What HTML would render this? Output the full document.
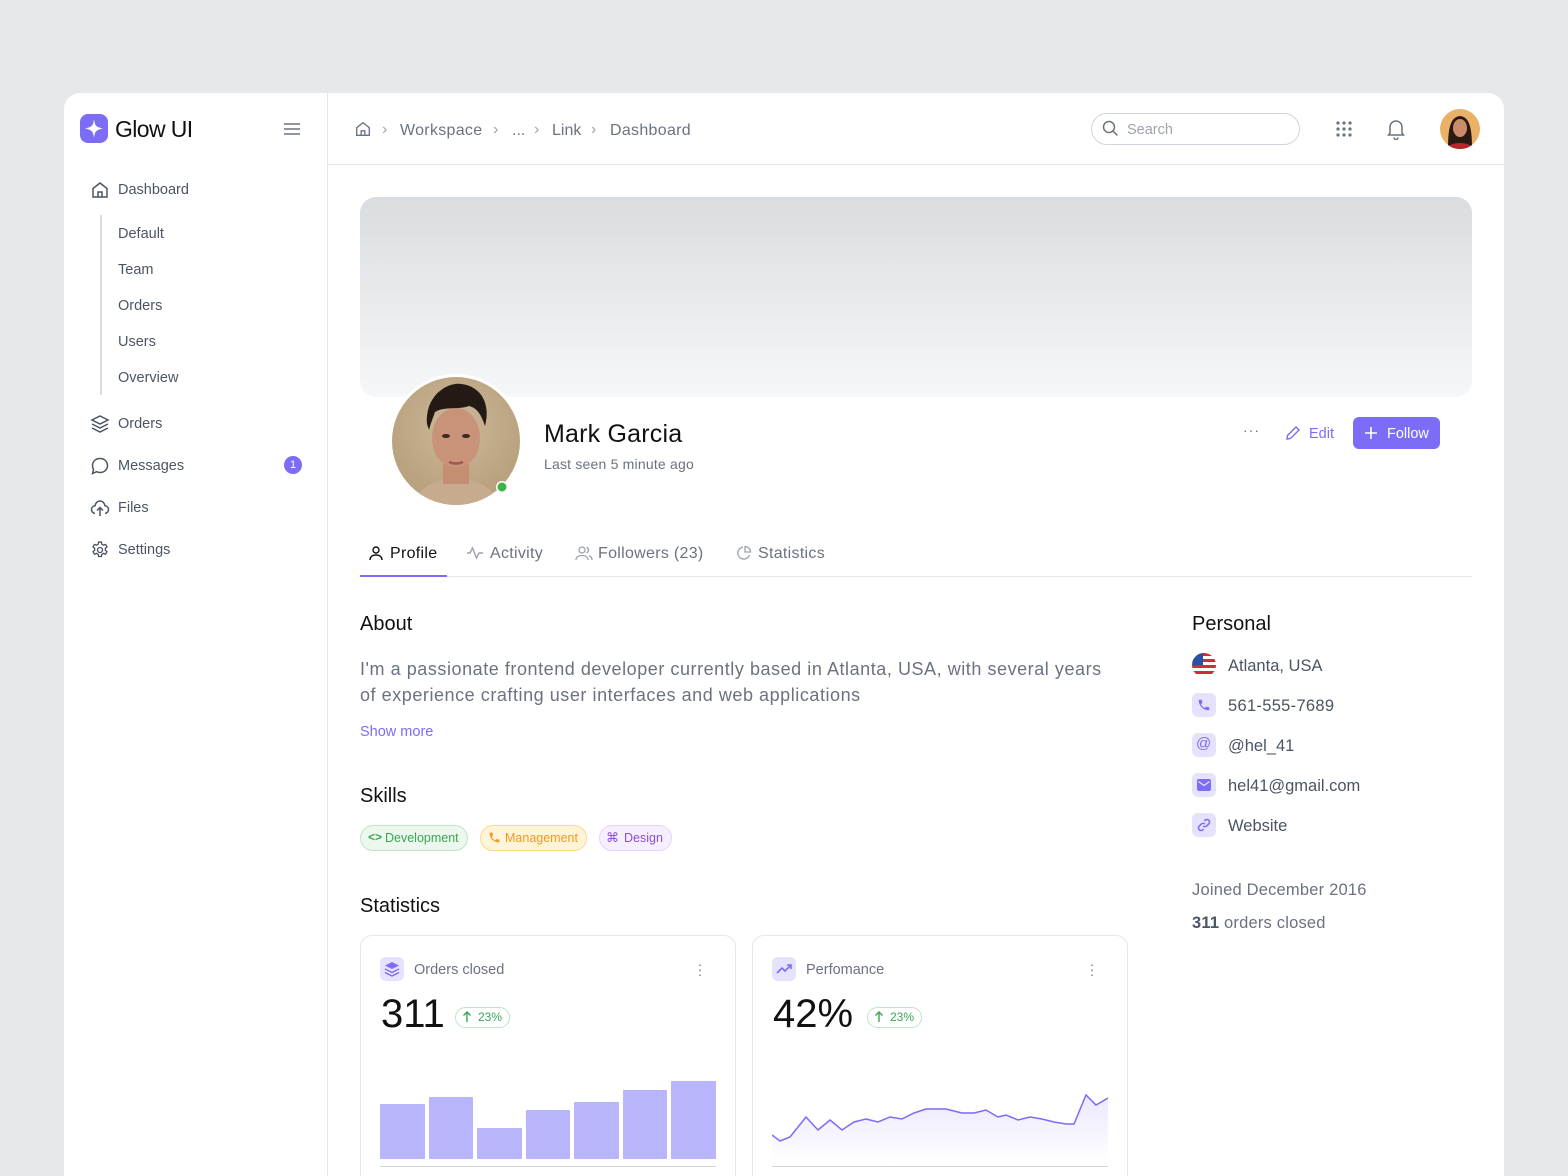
<!DOCTYPE html>
<html style="width:1568px;height:1176px;overflow:hidden"><head><meta charset="utf-8"><style>
*{box-sizing:border-box;margin:0;padding:0}
body{width:1568px;height:1176px;background:#e6e8ec;font-family:"Liberation Sans",sans-serif;position:relative;overflow:hidden;color:#111827}
.wrap{position:absolute;left:0;top:0;width:1568px;height:1176px;overflow:hidden}
.a{position:absolute;white-space:nowrap}
.card{position:absolute;left:64px;top:93px;width:1440px;height:1140px;background:#fff;border-radius:16px;overflow:hidden}
.side{position:absolute;left:0;top:0;width:264px;height:100%;border-right:1px solid #e5e7eb}
.nav{font-size:14.5px;color:#4b5563}
.gray{color:#6b7280}
svg{position:absolute}
.tab{font-size:16px;color:#6b7280;letter-spacing:0.3px}
.pi{position:absolute;width:24px;height:24px;border-radius:6px;background:#e4e2fd}
.chip{position:absolute;height:26px;border-radius:13px;font-size:12.5px;line-height:24px;padding:0 8px 0 24px;border:1px solid}
.sc{position:absolute;top:935px;width:376px;height:260px;border:1px solid #e5e7eb;border-radius:12px}
.badge{position:absolute;height:21px;border:1px solid #bfe6c5;border-radius:11px;color:#3aa553;font-size:12px;line-height:19px;padding:0 7px 0 22px}
</style></head><body><div class="wrap">
<div class="card">
<div class="side">
<svg style="left:16px;top:21px" width="28" height="29" viewBox="0 0 28 29"><rect x="0" y="0" width="28" height="29" rx="8" fill="#7c6cf6"/><path d="M14 5 C15 12 16 13 23 14.5 C16 16 15 17 14 24 C13 17 12 16 5 14.5 C12 13 13 12 14 5Z" fill="#fff"/></svg>
<div class="a" style="left:51px;top:23px;font-size:23px;letter-spacing:-0.6px;color:#111">Glow UI</div>
<svg style="left:219px;top:29px" width="18" height="14" viewBox="0 0 18 14"><path d="M1 2h16M1 7h16M1 12h16" stroke="#6b7280" stroke-width="1.6"/></svg>
<svg style="left:26px;top:87px" width="20" height="20" viewBox="0 0 20 20" fill="none" stroke="#4b5563" stroke-width="1.5"><path d="M3 8.5L10 3l7 5.5V17H3z"/><path d="M8 17v-5h4v5"/></svg>
<div class="a nav" style="left:54px;top:89px">Dashboard</div>
<div class="a" style="left:36px;top:122px;width:2px;height:180px;background:#d9dce1"></div>
<div class="a nav" style="left:54px;top:133px">Default</div>
<div class="a nav" style="left:54px;top:169px">Team</div>
<div class="a nav" style="left:54px;top:205px">Orders</div>
<div class="a nav" style="left:54px;top:241px">Users</div>
<div class="a nav" style="left:54px;top:277px">Overview</div>
<svg style="left:26px;top:321px" width="20" height="20" viewBox="0 0 20 20" fill="none" stroke="#4b5563" stroke-width="1.5"><path d="M10 2l8 4-8 4-8-4z"/><path d="M2 10l8 4 8-4M2 14l8 4 8-4"/></svg>
<div class="a nav" style="left:54px;top:323px">Orders</div>
<svg style="left:26px;top:363px" width="20" height="20" viewBox="0 0 20 20" fill="none" stroke="#4b5563" stroke-width="1.5"><path d="M10 2.5c4.4 0 7.5 3 7.5 7s-3.1 7-7.5 7c-1.3 0-2.5-.3-3.5-.8L2.5 17.5l1-3.8C2.8 12.6 2.5 11.1 2.5 9.5c0-4 3.1-7 7.5-7z"/></svg>
<div class="a nav" style="left:54px;top:365px">Messages</div>
<div class="a" style="left:220px;top:363px;width:18px;height:18px;border-radius:9px;background:#7c6cf6;color:#fff;font-size:11px;text-align:center;line-height:18px">1</div>
<svg style="left:26px;top:405px" width="20" height="20" viewBox="0 0 20 20" fill="none" stroke="#4b5563" stroke-width="1.5"><path d="M5 15.5C3 15 1.5 13.5 1.5 11.5c0-2 1.5-3.5 3.5-3.7C5.5 5 7.5 3 10 3s4.5 2 5 4.8c2 .2 3.5 1.7 3.5 3.7s-1.5 3.5-3.5 4"/><path d="M10 18v-8M7 12.5l3-3 3 3"/></svg>
<div class="a nav" style="left:54px;top:407px">Files</div>
<svg style="left:26px;top:447px" width="20" height="20" viewBox="0 0 24 24" fill="none" stroke="#4b5563" stroke-width="1.6"><circle cx="12" cy="12" r="3"/><path d="M10.3 2.5h3.4l.5 2.6 2 1.1 2.5-.9 1.7 2.9-2 1.8v2.3l2 1.8-1.700 2.9-2.5-.9-2 1.1-.5 2.6h-3.4l-.5-2.6-2-1.1-2.5.9-1.7-2.9 2-1.8V10L3.6 8.2l1.7-2.9 2.5.9 2-1.1z"/></svg>
<div class="a nav" style="left:54px;top:449px">Settings</div>
</div>
<div class="a" style="left:264px;top:71px;width:1176px;height:1px;background:#e5e7eb"></div>
<svg style="left:290px;top:27px" width="18" height="18" viewBox="0 0 20 20" fill="none" stroke="#6b7280" stroke-width="1.5"><path d="M3 8.5L10 3l7 5.5V17H3z"/><path d="M8 17v-5h4v5"/></svg>
<div class="a gray" style="left:318px;top:28px;font-size:16px;color:#9ca3af">›</div>
<div class="a gray" style="left:336px;top:29px;font-size:16px;letter-spacing:0.3px">Workspace</div>
<div class="a gray" style="left:429px;top:28px;font-size:16px;color:#9ca3af">›</div>
<div class="a gray" style="left:448px;top:29px;font-size:16px">...</div>
<div class="a gray" style="left:470px;top:28px;font-size:16px;color:#9ca3af">›</div>
<div class="a gray" style="left:488px;top:29px;font-size:16px">Link</div>
<div class="a gray" style="left:527px;top:28px;font-size:16px;color:#9ca3af">›</div>
<div class="a gray" style="left:546px;top:29px;font-size:16px;letter-spacing:0.3px">Dashboard</div>
<div class="a" style="left:1027px;top:20px;width:209px;height:32px;border:1px solid #d1d5db;border-radius:16px"></div>
<svg style="left:1038px;top:27px" width="17" height="17" viewBox="0 0 17 17" fill="none" stroke="#6b7280" stroke-width="1.5"><circle cx="7" cy="7" r="5.5"/><path d="M11 11l4.5 4.5"/></svg>
<div class="a" style="left:1063px;top:29px;font-size:14.5px;color:#9ca3af">Search</div>
<svg style="left:1271px;top:27px" width="18" height="18" viewBox="0 0 18 18" fill="#6b7280"><circle cx="3" cy="3" r="1.6"/><circle cx="9" cy="3" r="1.6"/><circle cx="15" cy="3" r="1.6"/><circle cx="3" cy="9" r="1.6"/><circle cx="9" cy="9" r="1.6"/><circle cx="15" cy="9" r="1.6"/><circle cx="3" cy="15" r="1.6"/><circle cx="9" cy="15" r="1.6"/><circle cx="15" cy="15" r="1.6"/></svg>
<svg style="left:1322px;top:25px" width="20" height="22" viewBox="0 0 20 22" fill="none" stroke="#6b7280" stroke-width="1.5"><path d="M4 15V9a6 6 0 0112 0v6l1.5 2h-15z"/><path d="M8 19.5a2 2 0 004 0"/></svg>
<svg style="left:1376px;top:16px" width="40" height="40" viewBox="0 0 40 40"><defs><clipPath id="c1"><circle cx="20" cy="20" r="20"/></clipPath></defs><g clip-path="url(#c1)"><rect width="40" height="40" fill="#eab268"/><path d="M8 40 C8 20 10 8 20 7 C30 8 32 20 32 40Z" fill="#2a1a14"/><ellipse cx="20" cy="19" rx="7" ry="9" fill="#c98b6a"/><path d="M6 40 C10 32 30 32 34 40Z" fill="#b8262a"/></g></svg>
</div>
<div class="a" style="left:360px;top:197px;width:1112px;height:200px;border-radius:16px;background:linear-gradient(#dadde0,#f6f7f8)"></div>
<svg style="left:389px;top:374px" width="134" height="134" viewBox="0 0 134 134"><defs><clipPath id="c2"><circle cx="67" cy="67" r="64"/></clipPath><radialGradient id="bg" cx="50%" cy="40%"><stop offset="0" stop-color="#cdb99a"/><stop offset="1" stop-color="#b9a27f"/></radialGradient></defs><circle cx="67" cy="67" r="67" fill="#fff"/><g clip-path="url(#c2)"><rect width="134" height="134" fill="url(#bg)"/><path d="M20 134 C30 110 50 105 67 105 C84 105 104 110 114 134Z" fill="#c8aa8e"/><rect x="54" y="82" width="26" height="28" fill="#c48e72"/><ellipse cx="67" cy="64" rx="24" ry="30" fill="#c9937a"/><path d="M38 50 C36 20 60 8 72 10 C92 12 102 30 96 52 C92 40 88 34 80 32 C70 36 56 32 46 38 C44 44 42 48 40 56Z" fill="#231a16"/><ellipse cx="57" cy="62" rx="4" ry="2" fill="#3a2820"/><ellipse cx="77" cy="62" rx="4" ry="2" fill="#3a2820"/><path d="M60 88 Q67 91 74 88" stroke="#9a5a4e" stroke-width="2.5" fill="none"/></g><circle cx="113" cy="113" r="6" fill="#fff"/><circle cx="113" cy="113" r="4.5" fill="#3bb54a"/></svg>
<div class="a" style="left:544px;top:420px;font-size:25px;color:#111;letter-spacing:0.2px">Mark Garcia</div>
<div class="a gray" style="left:544px;top:456px;font-size:14px;letter-spacing:0.2px">Last seen 5 minute ago</div>
<div class="a gray" style="left:1243px;top:422px;font-size:14px;letter-spacing:1px">···</div>
<svg style="left:1285px;top:425px" width="16" height="16" viewBox="0 0 16 16" fill="none" stroke="#7c6cf6" stroke-width="1.4"><path d="M11 2l3 3-8.5 8.5L2 14l.5-3.5z"/></svg>
<div class="a" style="left:1309px;top:426px;font-size:14.5px;color:#7c6cf6">Edit</div>
<div class="a" style="left:1353px;top:417px;width:87px;height:32px;border-radius:6px;background:#7c6cf6"></div>
<svg style="left:1363px;top:425px" width="16" height="16" viewBox="0 0 16 16" stroke="#fff" stroke-width="1.6"><path d="M8 2v12M2 8h12"/></svg>
<div class="a" style="left:1387px;top:426px;font-size:14.5px;color:#fff">Follow</div>
<svg style="left:368px;top:545px" width="16" height="16" viewBox="0 0 16 16" fill="none" stroke="#111" stroke-width="1.4"><circle cx="8" cy="5" r="3"/><path d="M2 15c0-3.5 2.7-5 6-5s6 1.5 6 5"/></svg>
<div class="a" style="left:390px;top:545px;font-size:16px;color:#111;letter-spacing:0.3px">Profile</div>
<svg style="left:466px;top:545px" width="18" height="16" viewBox="0 0 18 16" fill="none" stroke="#9ca3af" stroke-width="1.4"><path d="M1 8h3l2.5-5 4 10 2.5-5h4"/></svg>
<div class="a tab" style="left:490px;top:545px">Activity</div>
<svg style="left:575px;top:545px" width="18" height="16" viewBox="0 0 18 16" fill="none" stroke="#9ca3af" stroke-width="1.3"><circle cx="7" cy="5" r="3"/><path d="M1 15c0-3 2.5-4.5 6-4.5s6 1.5 6 4.5M11.5 2.2a3 3 0 010 5.6M14 10.8c1.8.6 3 1.9 3 4.2"/></svg>
<div class="a tab" style="left:598px;top:545px">Followers (23)</div>
<svg style="left:736px;top:545px" width="16" height="16" viewBox="0 0 16 16" fill="none" stroke="#9ca3af" stroke-width="1.3"><path d="M13.5 10A6 6 0 117 2.1"/><path d="M9 1.5A5.5 5.5 0 0114.5 7H9z"/></svg>
<div class="a tab" style="left:758px;top:545px">Statistics</div>
<div class="a" style="left:360px;top:576px;width:1112px;height:1px;background:#e5e7eb"></div>
<div class="a" style="left:360px;top:575px;width:87px;height:2px;background:#7c6cf6"></div>
<div class="a" style="left:360px;top:613px;font-size:20px;color:#111">About</div>
<div class="a" style="left:360px;top:656px;font-size:18px;letter-spacing:0.55px;line-height:26px;color:#6b7280">I'm a passionate frontend developer currently based in Atlanta, USA, with several years<br>of experience crafting user interfaces and web applications</div>
<div class="a" style="left:360px;top:724px;font-size:14.5px;color:#7c6cf6">Show more</div>
<div class="a" style="left:360px;top:785px;font-size:20px;color:#111">Skills</div>
<div class="chip" style="left:360px;top:825px;background:#ecf8ee;border-color:#bfe6c5;color:#3aa553">Development</div>
<div class="a" style="left:368px;top:830px;font-size:12px;color:#3aa553;font-weight:bold">&lt;&gt;</div>
<div class="chip" style="left:480px;top:825px;background:#fff3d9;border-color:#fbd98a;color:#f29b1a">Management</div>
<svg style="left:488px;top:831px" width="13" height="13" viewBox="0 0 24 24" fill="#f29b1a"><path d="M6.6 10.8a15 15 0 006.6 6.6l2.2-2.2c.3-.3.7-.4 1-.2 1.1.4 2.3.6 3.6.6.6 0 1 .4 1 1V20c0 .6-.4 1-1 1A17 17 0 013 4c0-.6.4-1 1-1h3.5c.6 0 1 .4 1 1 0 1.3.2 2.5.6 3.6.1.3 0 .7-.2 1z"/></svg>
<div class="chip" style="left:599px;top:825px;background:#f6efff;border-color:#e5d5fb;color:#8b4fd6">Design</div>
<div class="a" style="left:606px;top:830px;font-size:13px;color:#8b4fd6">⌘</div>
<div class="a" style="left:360px;top:895px;font-size:20px;color:#111">Statistics</div>
<div class="sc" style="left:360px"></div>
<div class="sc" style="left:752px"></div>
<div class="pi" style="left:380px;top:957px"></div>
<svg style="left:384px;top:961px" width="16" height="16" viewBox="0 0 16 16" fill="#7c6cf6"><path d="M8 1l7 3.5L8 8 1 4.5z"/><path d="M1 8l7 3.5L15 8M1 11.5L8 15l7-3.5" stroke="#7c6cf6" stroke-width="1.3" fill="none"/></svg>
<div class="a gray" style="left:414px;top:962px;font-size:14.5px">Orders closed</div>
<div class="a" style="left:697px;top:962px;font-size:14px;color:#6b7280;line-height:5px;width:6px;text-align:center">·<br>·<br>·</div>
<div class="a" style="left:381px;top:992px;font-size:40px;color:#111">311</div>
<div class="badge" style="left:455px;top:1007px">23%</div>
<svg style="left:462px;top:1011px" width="10" height="12" viewBox="0 0 10 12" fill="none" stroke="#3aa553" stroke-width="1.4"><path d="M5 11V1M1.5 4.5L5 1l3.5 3.5"/></svg>
<svg style="left:380px;top:1075px" width="336" height="95"><g fill="#b9b5fc"><rect x="0" y="29" width="45" height="55" rx="1"/><rect x="49" y="22" width="44" height="62" rx="1"/><rect x="97" y="53" width="45" height="31" rx="1"/><rect x="146" y="35" width="44" height="49" rx="1"/><rect x="194" y="27" width="45" height="57" rx="1"/><rect x="243" y="15" width="44" height="69" rx="1"/><rect x="291" y="6" width="45" height="78" rx="1"/></g><rect x="0" y="91" width="336" height="1" fill="#d1d5db"/></svg>
<div class="pi" style="left:772px;top:957px"></div>
<svg style="left:776px;top:962px" width="16" height="14" viewBox="0 0 16 14" fill="none" stroke="#7c6cf6" stroke-width="1.6"><path d="M1 11l5-5 3 3 6-6M11 3h4v4"/></svg>
<div class="a gray" style="left:806px;top:962px;font-size:14.5px">Perfomance</div>
<div class="a" style="left:1089px;top:962px;font-size:14px;color:#6b7280;line-height:5px;width:6px;text-align:center">·<br>·<br>·</div>
<div class="a" style="left:773px;top:992px;font-size:40px;color:#111">42%</div>
<div class="badge" style="left:867px;top:1007px">23%</div>
<svg style="left:874px;top:1011px" width="10" height="12" viewBox="0 0 10 12" fill="none" stroke="#3aa553" stroke-width="1.4"><path d="M5 11V1M1.5 4.5L5 1l3.5 3.5"/></svg>
<svg style="left:772px;top:1085px" width="336" height="85" viewBox="772 1085 336 85"><defs><linearGradient id="lg" x1="0" y1="0" x2="0" y2="1"><stop offset="0" stop-color="#ece9fe"/><stop offset="1" stop-color="#fff"/></linearGradient></defs><path d="M772 1135L780 1141 790 1137 806 1117 818 1130 830 1120 842 1130 854 1122 866 1119 878 1122 890 1117 902 1119 914 1113 926 1109 946 1109 962 1113 974 1113 986 1110 998 1117 1006 1115 1018 1120 1030 1117 1042 1119 1054 1122 1066 1124 1074 1124 1086 1095 1096 1105 1108 1098V1166H772Z" fill="url(#lg)"/><path d="M772 1135L780 1141 790 1137 806 1117 818 1130 830 1120 842 1130 854 1122 866 1119 878 1122 890 1117 902 1119 914 1113 926 1109 946 1109 962 1113 974 1113 986 1110 998 1117 1006 1115 1018 1120 1030 1117 1042 1119 1054 1122 1066 1124 1074 1124 1086 1095 1096 1105 1108 1098" fill="none" stroke="#7c6cf6" stroke-width="1.5"/><rect x="772" y="1166" width="336" height="1" fill="#d1d5db"/></svg>
<div class="a" style="left:1192px;top:613px;font-size:20px;color:#111">Personal</div>
<svg style="left:1192px;top:653px" width="24" height="24" viewBox="0 0 24 24"><defs><clipPath id="c3"><circle cx="12" cy="12" r="12"/></clipPath></defs><g clip-path="url(#c3)"><rect width="24" height="24" fill="#fff"/><rect y="0" width="24" height="3" fill="#d42b3a"/><rect y="6" width="24" height="3" fill="#d42b3a"/><rect y="12" width="24" height="3" fill="#d42b3a"/><rect y="18" width="24" height="3" fill="#d42b3a"/><rect width="11" height="12" fill="#2a4fa8"/></g></svg>
<div class="a" style="left:1228px;top:657px;font-size:16.5px;color:#4b5563">Atlanta, USA</div>
<div class="pi" style="left:1192px;top:693px"></div>
<svg style="left:1197px;top:698px" width="14" height="14" viewBox="0 0 24 24" fill="#7c6cf6"><path d="M6.6 10.8a15 15 0 006.6 6.6l2.2-2.2c.3-.3.7-.4 1-.2 1.1.4 2.3.6 3.6.6.6 0 1 .4 1 1V20c0 .6-.4 1-1 1A17 17 0 013 4c0-.6.4-1 1-1h3.5c.6 0 1 .4 1 1 0 1.3.2 2.5.6 3.6.1.3 0 .7-.2 1z"/></svg>
<div class="a" style="left:1228px;top:697px;font-size:16.5px;color:#4b5563;letter-spacing:0.3px">561-555-7689</div>
<div class="pi" style="left:1192px;top:733px"></div>
<div class="a" style="left:1196px;top:735px;font-size:15px;color:#7c6cf6">@</div>
<div class="a" style="left:1228px;top:737px;font-size:16.5px;color:#4b5563">@hel_41</div>
<div class="pi" style="left:1192px;top:773px"></div>
<svg style="left:1197px;top:779px" width="14" height="12" viewBox="0 0 14 12"><rect width="14" height="12" rx="2" fill="#7c6cf6"/><path d="M1.5 2.5L7 6.5l5.5-4" stroke="#e4e2fd" stroke-width="1.3" fill="none"/></svg>
<div class="a" style="left:1228px;top:777px;font-size:16.5px;color:#4b5563">hel41@gmail.com</div>
<div class="pi" style="left:1192px;top:813px"></div>
<svg style="left:1197px;top:818px" width="14" height="14" viewBox="0 0 16 16" fill="none" stroke="#7c6cf6" stroke-width="1.8"><path d="M7 9a3 3 0 004.2 0l2.5-2.5a3 3 0 00-4.2-4.2L8.5 3.3M9 7a3 3 0 00-4.2 0L2.3 9.5a3 3 0 004.2 4.2l1-1"/></svg>
<div class="a" style="left:1228px;top:817px;font-size:16.5px;color:#4b5563">Website</div>
<div class="a" style="left:1192px;top:881px;font-size:16.5px;color:#6b7280;letter-spacing:0.2px">Joined December 2016</div>
<div class="a" style="left:1192px;top:914px;font-size:16.5px;color:#6b7280;letter-spacing:0.2px"><span style="color:#4b5563;font-weight:bold">311</span> orders closed</div>
</div></body></html>
